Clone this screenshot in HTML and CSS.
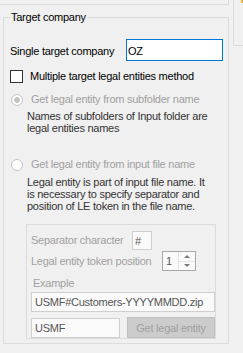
FILE: index.html
```html
<!DOCTYPE html>
<html>
<head>
  <meta charset='UTF-8'>
  <title>Target company</title>
  <link rel="stylesheet" href="styles.css">
</head>
<body>
  <div class='page'>
    <div class='main'>
      <div class='prev'></div>
      <fieldset class='grp'>
        <legend>Target company</legend>

        <div class='r co'>
          <label for='tc'>Single target company</label>
          <input id='tc' class='tb big' value='OZ'>
        </div>

        <label class='r chk'><input type='checkbox'>Multiple target legal entities method</label>

        <label class='r opt'><input type='radio' name='le' class='on' disabled>Get legal entity from subfolder name</label>
        <p class='n n1'>Names of subfolders of Input folder are<br>legal entities names</p>

        <label class='r opt o2'><input type='radio' name='le' disabled>Get legal entity from input file name</label>
        <p class='n n2'>Legal entity is part of input file name. It<br>is necessary to specify separator and<br>position of LE token in the file name.</p>

        <div class='pn'>
          <div class='pr'>
            <span class='pl w1'>Separator character</span>
            <input class='tb sm' value='#' disabled>
          </div>
          <div class='pr p2'>
            <span class='pl w2'>Legal entity token position</span>
            <div class='ud'>
              <span class='uv'>1</span>
              <span class='ub'><i class='up'></i><i class='dn'></i></span>
            </div>
          </div>
          <div class='ex'>Example</div>
          <input class='tb wd' value='USMF#Customers-YYYYMMDD.zip' disabled>
          <div class='br'>
            <input class='tb hf' value='USMF' disabled>
            <button disabled>Get legal entity</button>
          </div>
        </div>
      </fieldset>
    </div>
    <div class='side'><span class='dot'></span></div>
  </div>
</body>
</html>
```

FILE: styles.css
```css
body{margin:0;background:#f0f0f0;font-family:"Liberation Sans",Arial,sans-serif;font-size:11px;letter-spacing:-0.25px;color:#000;overflow:hidden;}
.page{display:flex;width:243px;height:353px;}
.main{width:229px;flex:none;}
.prev{height:5px;box-sizing:border-box;border-right:1px solid #dcdcdc;border-bottom:1px solid #dcdcdc;}
.side{flex:none;width:10px;height:46px;margin-left:4px;box-sizing:border-box;border-left:1px solid #dcdcdc;border-bottom:1px solid #dcdcdc;}
.dot{display:block;width:3px;height:3px;margin-left:7px;background:#e6b23c;border-radius:0 0 2px 2px;}

.grp{margin:6px 0 0 3px;width:226px;box-sizing:border-box;border:1px solid #dcdcdc;padding:0 5px 4px 6px;min-width:0;}
.grp legend{padding:0 1px;line-height:13px;}

.r{display:flex;align-items:center;line-height:13px;}
.co{margin-top:15px;align-items:baseline;}
.co label{flex:none;}
.tb{font:inherit;letter-spacing:inherit;line-height:13px;box-sizing:border-box;margin:0;outline:none;}
.big{margin-left:auto;width:97px;height:22px;padding:2px 1px 0;border:1px solid #0078d7;background:#fff;color:#000;}

.chk{margin-top:9px;height:13px;}
.chk input{appearance:none;-webkit-appearance:none;width:13px;height:13px;margin:0 7px 0 0;border:1px solid #333;background:#fff;box-sizing:border-box;}

.opt{margin-top:10px;height:13px;color:#a0a0a0;}
.o2{margin-top:24px;}
.opt input{appearance:none;-webkit-appearance:none;width:12px;height:12px;margin:0 8px 0 1px;border:1px solid #c4c4c4;border-radius:50%;background:#fff;box-sizing:border-box;}
.opt input.on{background:radial-gradient(circle,#c4c4c4 2.6px,#fff 3.2px);}

.n{margin:4px 0 0 17px;line-height:12px;color:#333;}
.n2{margin-top:5px;}

.pn{margin:12px 0 0 16px;width:190px;box-sizing:border-box;border:1px solid #dcdcdc;padding:6px 0 0 4px;color:#a0a0a0;}
.pr{display:flex;align-items:center;line-height:13px;}
.p2{margin-top:1px;}
.pl{flex:none;}
.w1{width:101px;}
.w2{width:131px;}
.sm{width:20px;height:19px;padding:0 2px;border:1px solid #cfcfcf;background:#fafafa;color:#555;}

.ud{display:flex;width:34px;height:20px;box-sizing:border-box;border:1px solid #a8a8a8;background:#fafafa;}
.uv{flex:1;padding:3px 0 0 3px;color:#555;line-height:13px;}
.ub{width:16px;display:flex;flex-direction:column;border-left:1px solid #e3e3e3;}
.ub i{flex:1;display:flex;align-items:center;justify-content:center;}
.up::after,.dn::after{content:'';border-left:3px solid transparent;border-right:3px solid transparent;}
.up::after{border-bottom:3px solid #7a7a7a;}
.dn::after{border-top:3px solid #7a7a7a;}
.dn{border-top:1px solid #e3e3e3;}

.ex{margin:6px 0 0 2px;line-height:13px;}
.wd{display:block;margin-top:2px;width:184px;height:20px;padding:0 3px;border:1px solid #cfcfcf;background:#fafafa;color:#555;}
.br{display:flex;align-items:flex-end;gap:7px;margin-top:5px;}
.hf{width:89px;height:20px;padding:0 3px;border:1px solid #cfcfcf;background:#fafafa;color:#555;}
button{font:inherit;letter-spacing:inherit;width:89px;height:21px;margin:0;padding:0;background:#ccc;border:1px solid #bfbfbf;color:#a0a0a0;}
```
